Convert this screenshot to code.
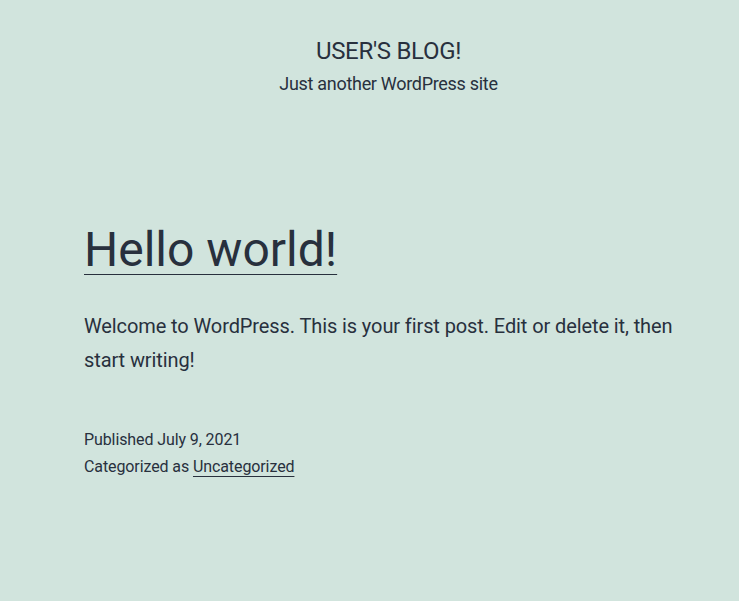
export default function App() {
  return (
    <div
      className="min-h-[601px] bg-[#d1e4dd] text-[#28303d]"
      style={{ fontFamily: 'Roboto, "Noto Sans", sans-serif' }}
    >
      <header className="pt-[36px] pl-[38px] text-center">
        <p className="text-[24px] leading-[31px] uppercase tracking-[-0.3px]">User's Blog!</p>
        <p className="mt-[4px] text-[18px] leading-[25px] tracking-[-0.3px]">Just another WordPress site</p>
      </header>
      <main className="pl-[84px] pr-[40px] pt-[127px]">
        <h1 className="text-[48px] leading-[53px] font-normal">
          <a href="#" className="underline decoration-1 underline-offset-[8px]">Hello world!</a>
        </h1>
        <p className="mt-[33px] max-w-[610px] text-[20px] leading-[34px] tracking-[-0.1px]">
          Welcome to WordPress. This is your first post. Edit or delete it, then start writing!
        </p>
        <footer className="mt-[49px] text-[16px] leading-[27px] tracking-[-0.1px]">
          <p>Published July 9, 2021</p>
          <p>
            Categorized as{' '}
            <a href="#" className="underline decoration-1 underline-offset-[4px]">Uncategorized</a>
          </p>
        </footer>
      </main>
    </div>
  );
}
